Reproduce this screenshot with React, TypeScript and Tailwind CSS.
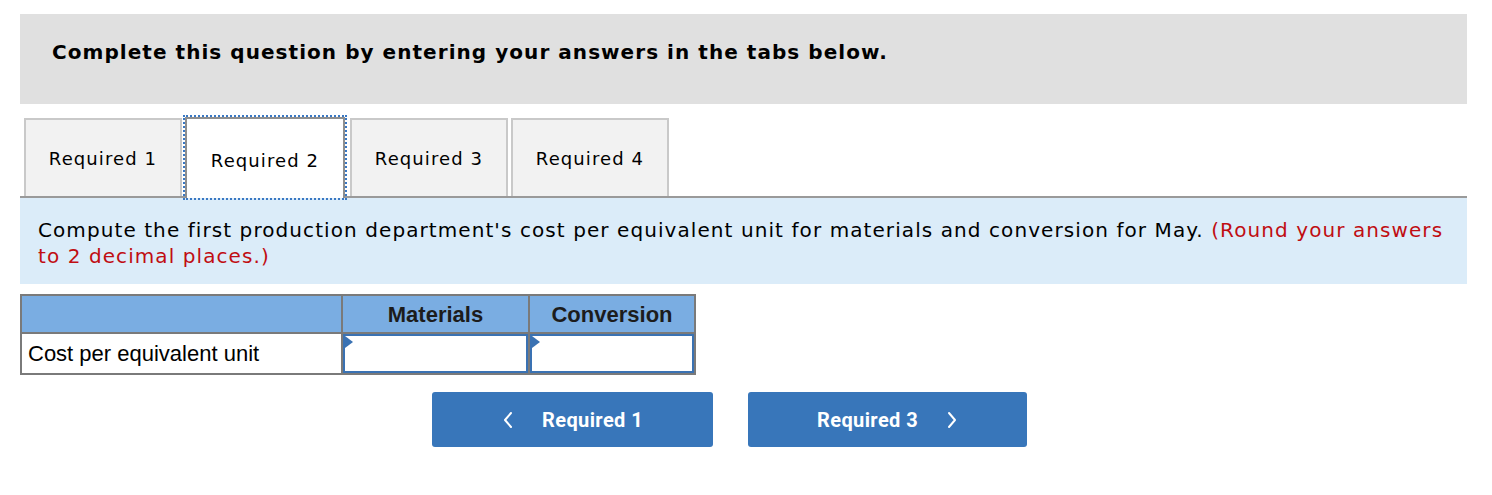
import React from "react";

const verdana = { fontFamily: '"DejaVu Sans", Verdana, sans-serif' };

function Tab({ label, className = "" }: { label: string; className?: string }) {
  return (
    <div
      className={`flex h-[78px] w-[158px] items-center justify-center border-2 border-b-0 border-[#c9c9c9] bg-[#f2f2f2] text-[18px] tracking-[1.1px] text-black ${className}`}
      style={verdana}
    >
      {label}
    </div>
  );
}

function ActiveTab({ label }: { label: string }) {
  return (
    <div
      className="relative z-10 -mb-[2px] ml-[3px] flex h-[81px] w-[160px] items-center justify-center border-2 border-b-0 border-[#8f8f8f] bg-white pt-[3px] text-[18px] tracking-[1.1px] text-black outline-dotted outline-2 outline-offset-0 outline-[#3a78c3]"
      style={verdana}
    >
      {label}
    </div>
  );
}

function InputCell() {
  return (
    <div className="relative h-full w-full border-2 border-[#3a72b3] bg-white">
      <div className="absolute left-0 top-0 h-0 w-0 border-y-[6px] border-l-[8px] border-y-transparent border-l-[#3a72b3]" />
    </div>
  );
}

function Chevron({ dir }: { dir: "left" | "right" }) {
  return (
    <svg width="12" height="18" viewBox="0 0 12 18" fill="none">
      <path
        d={dir === "left" ? "M9 2 L3 9 L9 16" : "M3 2 L9 9 L3 16"}
        stroke="white"
        strokeWidth="2"
        strokeLinecap="round"
        strokeLinejoin="round"
      />
    </svg>
  );
}

export default function App() {
  return (
    <div className="w-[1492px] bg-white pl-[20px] pr-[25px] pt-[14px] pb-[49px]">
      <div className="h-[90px] bg-[#e0e0e0] pl-[32px] pt-[24px]">
        <div
          className="text-[20px] font-bold leading-[28px] tracking-[1.05px] text-black"
          style={verdana}
        >
          Complete this question by entering your answers in the tabs below.
        </div>
      </div>

      <div className="mt-[13px] flex items-end border-b-2 border-[#9a9a9a] pl-[4px]">
        <Tab label="Required 1" />
        <ActiveTab label="Required 2" />
        <Tab label="Required 3" className="ml-[5px]" />
        <Tab label="Required 4" className="ml-[3px]" />
      </div>

      <div
        className="bg-[#dbecf9] pl-[18px] pr-[20px] pt-[19px] pb-[15px] text-[20px] leading-[26px] tracking-[1.08px] text-black"
        style={verdana}
      >
        Compute the first production department's cost per equivalent unit for materials and
        conversion for May. <span className="text-[#c00d12]">(Round your answers to 2 decimal places.)</span>
      </div>

      <div
        className="mt-[10px] grid w-[676px] grid-cols-[321px_187px_164px] border-2 border-[#7a7a7a]"
        style={{ fontFamily: '"Liberation Sans", Arial, sans-serif' }}
      >
        <div className="h-[38px] border-r-2 border-b-2 border-[#7a7a7a] bg-[#7aade2]" />
        <div className="flex h-[38px] items-center justify-center border-r-2 border-b-2 border-[#7a7a7a] bg-[#7aade2] pt-[1px] text-[22px] font-bold text-[#1c1c1c]">
          Materials
        </div>
        <div className="flex h-[38px] items-center justify-center border-b-2 border-[#7a7a7a] bg-[#7aade2] pt-[1px] text-[22px] font-bold text-[#1c1c1c]">
          Conversion
        </div>
        <div className="flex h-[39px] items-center border-r-2 border-[#7a7a7a] bg-white pl-[6px] text-[22px] text-black">
          Cost per equivalent unit
        </div>
        <div className="h-[39px] border-r-2 border-[#7a7a7a]">
          <InputCell />
        </div>
        <div className="h-[39px]">
          <InputCell />
        </div>
      </div>

      <div
        className="mt-[17px] flex gap-[35px] pl-[412px]"
        style={{ fontFamily: 'Roboto, "Liberation Sans", sans-serif' }}
      >
        <button className="flex h-[55px] w-[281px] items-center justify-center gap-[28px] rounded-[3px] bg-[#3876ba] text-[20px] font-bold tracking-[0.4px] text-white">
          <Chevron dir="left" />
          <span>Required 1</span>
        </button>
        <button className="flex h-[55px] w-[279px] items-center justify-center gap-[28px] rounded-[3px] bg-[#3876ba] text-[20px] font-bold tracking-[0.4px] text-white">
          <span>Required 3</span>
          <Chevron dir="right" />
        </button>
      </div>
    </div>
  );
}
